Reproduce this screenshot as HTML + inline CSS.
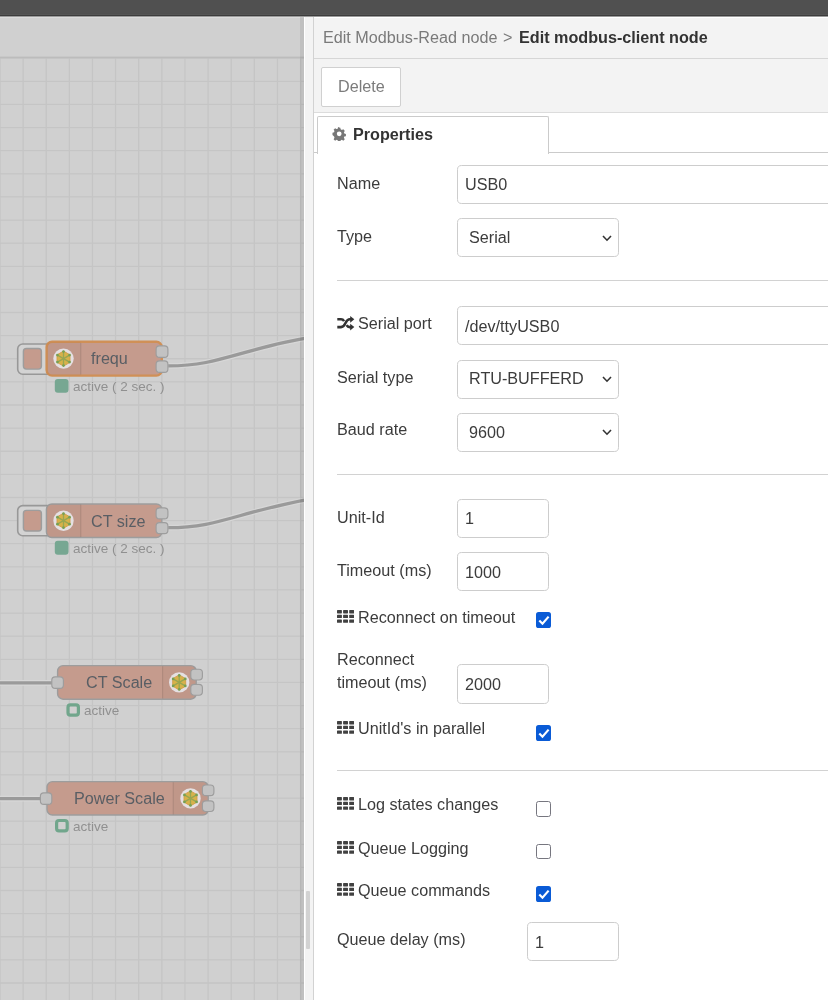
<!DOCTYPE html>
<html><head><meta charset="utf-8"><style>
html,body{margin:0;padding:0;width:828px;height:1000px;overflow:hidden;background:#d0d0d0;font-family:"Liberation Sans",sans-serif;}
.cv{position:absolute;left:0;top:0}
.t{position:absolute;white-space:pre;line-height:20px;font-size:16.18px;will-change:transform}
.nl{color:#595e64}
.st{position:absolute;white-space:pre;line-height:16px;font-size:13.5px;color:#909090;will-change:transform}
.strip{position:absolute;left:304px;top:17px;width:8px;height:983px;background:#f3f3f3;border-left:1.6px solid #fff}
.tray{position:absolute;left:313px;top:17px;width:515px;height:983px;background:#fff;border-left:1.2px solid #d2d2d2}
.thdr{position:absolute;left:0;top:0;right:0;height:41.7px;box-sizing:border-box;background:#f3f3f3;border-bottom:1px solid #d6d6d6;border-top:1px solid #fff}
.tbtn{position:absolute;left:0;top:41.7px;right:0;height:54.4px;box-sizing:border-box;background:#f3f3f3;border-bottom:1px solid #dcdcdc}
.ttabs{position:absolute;left:0;top:135.1px;right:0;height:1.4px;background:#cbcbcb}
.tab{position:absolute;left:317.2px;top:116.4px;width:231.6px;height:37.4px;background:#fff;border:1.4px solid #cbcbcb;border-bottom:none;border-radius:2px 2px 0 0;box-sizing:border-box}
.crumb{color:#7a7a7a}
.crumbb{color:#333;font-weight:bold}
.btn{position:absolute;background:#fff;border:1.3px solid #d0d0d0;border-radius:2px;box-sizing:border-box}
.btxt{color:#7c7c7c}
.tabt{color:#333;font-weight:bold}
.lbl{color:#3c3c3c}
.itxt{color:#3c3c3c}
.inp{position:absolute;height:39.1px;background:#fff;border:1px solid #cdcdcd;border-radius:4.6px;box-sizing:border-box}
.hr{position:absolute;left:337.1px;width:600px;height:1.2px;background:#d2d2d2}
.cbx{position:absolute;left:536px;width:15.4px;height:15.4px;box-sizing:border-box;border:1.8px solid #76767f;border-radius:2.6px;background:#fff}
.cbx.on{background:#0a5bd6;border:none}
.cbx svg{position:absolute;left:0;top:0}
</style></head><body>
<svg class="cv" width="828" height="1000" viewBox="0 0 828 1000">
<rect x="0" y="0" width="828" height="1000" fill="#d0d0d0"/>
<g stroke="#c5c5c5" stroke-width="1.3"><line x1="0.00" y1="58" x2="0.00" y2="1000"/><line x1="23.12" y1="58" x2="23.12" y2="1000"/><line x1="46.24" y1="58" x2="46.24" y2="1000"/><line x1="69.36" y1="58" x2="69.36" y2="1000"/><line x1="92.48" y1="58" x2="92.48" y2="1000"/><line x1="115.60" y1="58" x2="115.60" y2="1000"/><line x1="138.72" y1="58" x2="138.72" y2="1000"/><line x1="161.84" y1="58" x2="161.84" y2="1000"/><line x1="184.96" y1="58" x2="184.96" y2="1000"/><line x1="208.08" y1="58" x2="208.08" y2="1000"/><line x1="231.20" y1="58" x2="231.20" y2="1000"/><line x1="254.32" y1="58" x2="254.32" y2="1000"/><line x1="277.44" y1="58" x2="277.44" y2="1000"/><line x1="300.56" y1="58" x2="300.56" y2="1000"/><line x1="0" y1="58.20" x2="310" y2="58.20"/><line x1="0" y1="81.32" x2="310" y2="81.32"/><line x1="0" y1="104.44" x2="310" y2="104.44"/><line x1="0" y1="127.56" x2="310" y2="127.56"/><line x1="0" y1="150.68" x2="310" y2="150.68"/><line x1="0" y1="173.80" x2="310" y2="173.80"/><line x1="0" y1="196.92" x2="310" y2="196.92"/><line x1="0" y1="220.04" x2="310" y2="220.04"/><line x1="0" y1="243.16" x2="310" y2="243.16"/><line x1="0" y1="266.28" x2="310" y2="266.28"/><line x1="0" y1="289.40" x2="310" y2="289.40"/><line x1="0" y1="312.52" x2="310" y2="312.52"/><line x1="0" y1="335.64" x2="310" y2="335.64"/><line x1="0" y1="358.76" x2="310" y2="358.76"/><line x1="0" y1="381.88" x2="310" y2="381.88"/><line x1="0" y1="405.00" x2="310" y2="405.00"/><line x1="0" y1="428.12" x2="310" y2="428.12"/><line x1="0" y1="451.24" x2="310" y2="451.24"/><line x1="0" y1="474.36" x2="310" y2="474.36"/><line x1="0" y1="497.48" x2="310" y2="497.48"/><line x1="0" y1="520.60" x2="310" y2="520.60"/><line x1="0" y1="543.72" x2="310" y2="543.72"/><line x1="0" y1="566.84" x2="310" y2="566.84"/><line x1="0" y1="589.96" x2="310" y2="589.96"/><line x1="0" y1="613.08" x2="310" y2="613.08"/><line x1="0" y1="636.20" x2="310" y2="636.20"/><line x1="0" y1="659.32" x2="310" y2="659.32"/><line x1="0" y1="682.44" x2="310" y2="682.44"/><line x1="0" y1="705.56" x2="310" y2="705.56"/><line x1="0" y1="728.68" x2="310" y2="728.68"/><line x1="0" y1="751.80" x2="310" y2="751.80"/><line x1="0" y1="774.92" x2="310" y2="774.92"/><line x1="0" y1="798.04" x2="310" y2="798.04"/><line x1="0" y1="821.16" x2="310" y2="821.16"/><line x1="0" y1="844.28" x2="310" y2="844.28"/><line x1="0" y1="867.40" x2="310" y2="867.40"/><line x1="0" y1="890.52" x2="310" y2="890.52"/><line x1="0" y1="913.64" x2="310" y2="913.64"/><line x1="0" y1="936.76" x2="310" y2="936.76"/><line x1="0" y1="959.88" x2="310" y2="959.88"/><line x1="0" y1="983.00" x2="310" y2="983.00"/></g>
<rect x="0" y="0" width="828" height="16.6" fill="#505050"/>
<rect x="0" y="13.9" width="828" height="1.2" fill="#555555"/><rect x="0" y="15.2" width="828" height="1.3" fill="#393939"/>
<rect x="0" y="16.6" width="828" height="40.6" fill="#d0d0d0"/>
<rect x="0" y="16.8" width="828" height="1" fill="#dedede"/>
<rect x="0" y="56.6" width="828" height="1.6" fill="#bcbcbc"/>
<path d="M168.2 365.9 C257.6 365.9 242.5 318.4 620 318.4" fill="none" stroke="#d7d7d7" stroke-width="5.6"/><path d="M168.2 365.9 C257.6 365.9 242.5 318.4 620 318.4" fill="none" stroke="#9a9a9a" stroke-width="3.3"/>
<path d="M168.2 527.7 C257.6 527.7 242.5 480.2 620 480.2" fill="none" stroke="#d7d7d7" stroke-width="5.6"/><path d="M168.2 527.7 C257.6 527.7 242.5 480.2 620 480.2" fill="none" stroke="#9a9a9a" stroke-width="3.3"/>
<line x1="0" y1="682.9" x2="55" y2="682.9" stroke="#d7d7d7" stroke-width="5.6"/><line x1="0" y1="682.9" x2="55" y2="682.9" stroke="#9a9a9a" stroke-width="3.3"/>
<line x1="0" y1="798.6" x2="44" y2="798.6" stroke="#d7d7d7" stroke-width="5.6"/><line x1="0" y1="798.6" x2="44" y2="798.6" stroke="#9a9a9a" stroke-width="3.3"/>
<rect x="17.7" y="344" width="34" height="30.2" rx="5" fill="#d3d3d3" stroke="#989898" stroke-width="1.6"/>
<rect x="23.4" y="348.5" width="18" height="20.6" rx="3" fill="#c59b8d" stroke="#9d9d9d" stroke-width="1.4"/>
<rect x="46.6" y="341.8" width="115.2" height="33.8" rx="5.5" fill="#c59b8d" stroke="#d09057" stroke-width="2.4"/>
<path d="M46.6 341.8 H80.8 V375.6 H46.6 Z" fill="rgba(0,0,0,0.025)"/>
<line x1="80.8" y1="343" x2="80.8" y2="374.4" stroke="rgba(0,0,0,0.1)" stroke-width="1.15"/>
<circle cx="63.5" cy="358.6" r="10.2" fill="#e4e0e2"/><polygon points="63.50,351.10 70.00,354.85 70.00,362.35 63.50,366.10 57.00,362.35 57.00,354.85" fill="#d7b24a" stroke="#d09c4a" stroke-width="0.9" stroke-linejoin="round"/><line x1="63.5" y1="358.6" x2="63.50" y2="351.60" stroke="#97a653" stroke-width="1.35"/><circle cx="63.50" cy="351.60" r="1.35" fill="#76a054"/><line x1="63.5" y1="358.6" x2="69.56" y2="355.10" stroke="#97a653" stroke-width="1.35"/><circle cx="69.56" cy="355.10" r="1.35" fill="#76a054"/><line x1="63.5" y1="358.6" x2="69.56" y2="362.10" stroke="#97a653" stroke-width="1.35"/><circle cx="69.56" cy="362.10" r="1.35" fill="#76a054"/><line x1="63.5" y1="358.6" x2="63.50" y2="365.60" stroke="#97a653" stroke-width="1.35"/><circle cx="63.50" cy="365.60" r="1.35" fill="#76a054"/><line x1="63.5" y1="358.6" x2="57.44" y2="362.10" stroke="#97a653" stroke-width="1.35"/><circle cx="57.44" cy="362.10" r="1.35" fill="#76a054"/><line x1="63.5" y1="358.6" x2="57.44" y2="355.10" stroke="#97a653" stroke-width="1.35"/><circle cx="57.44" cy="355.10" r="1.35" fill="#76a054"/>
<rect x="156.1" y="345.8" width="11.8" height="11.6" rx="3.4" fill="#c2c2c2" stroke="#9d9d9d" stroke-width="1.15"/>
<rect x="156.1" y="360.8" width="11.8" height="11.6" rx="3.4" fill="#c2c2c2" stroke="#9d9d9d" stroke-width="1.15"/>
<rect x="54.8" y="379" width="13.7" height="13.8" rx="3" fill="#77a792"/>
<rect x="17.7" y="505.6" width="34" height="30.1" rx="5" fill="#d3d3d3" stroke="#989898" stroke-width="1.6"/>
<rect x="23.4" y="510.4" width="18" height="20.6" rx="3" fill="#c59b8d" stroke="#9d9d9d" stroke-width="1.4"/>
<rect x="46.4" y="504" width="115.4" height="33.5" rx="5.5" fill="#c59b8d" stroke="#9d9d9d" stroke-width="1.4"/>
<path d="M46.4 504 H80.8 V537.5 H46.4 Z" fill="rgba(0,0,0,0.025)"/>
<line x1="80.8" y1="504.6" x2="80.8" y2="537" stroke="rgba(0,0,0,0.1)" stroke-width="1.15"/>
<circle cx="63.5" cy="520.7" r="10.2" fill="#e4e0e2"/><polygon points="63.50,513.20 70.00,516.95 70.00,524.45 63.50,528.20 57.00,524.45 57.00,516.95" fill="#d7b24a" stroke="#d09c4a" stroke-width="0.9" stroke-linejoin="round"/><line x1="63.5" y1="520.7" x2="63.50" y2="513.70" stroke="#97a653" stroke-width="1.35"/><circle cx="63.50" cy="513.70" r="1.35" fill="#76a054"/><line x1="63.5" y1="520.7" x2="69.56" y2="517.20" stroke="#97a653" stroke-width="1.35"/><circle cx="69.56" cy="517.20" r="1.35" fill="#76a054"/><line x1="63.5" y1="520.7" x2="69.56" y2="524.20" stroke="#97a653" stroke-width="1.35"/><circle cx="69.56" cy="524.20" r="1.35" fill="#76a054"/><line x1="63.5" y1="520.7" x2="63.50" y2="527.70" stroke="#97a653" stroke-width="1.35"/><circle cx="63.50" cy="527.70" r="1.35" fill="#76a054"/><line x1="63.5" y1="520.7" x2="57.44" y2="524.20" stroke="#97a653" stroke-width="1.35"/><circle cx="57.44" cy="524.20" r="1.35" fill="#76a054"/><line x1="63.5" y1="520.7" x2="57.44" y2="517.20" stroke="#97a653" stroke-width="1.35"/><circle cx="57.44" cy="517.20" r="1.35" fill="#76a054"/>
<rect x="156.1" y="507.9" width="11.8" height="11" rx="3.4" fill="#c2c2c2" stroke="#9d9d9d" stroke-width="1.15"/>
<rect x="156.1" y="522.6" width="11.8" height="11" rx="3.4" fill="#c2c2c2" stroke="#9d9d9d" stroke-width="1.15"/>
<rect x="54.8" y="540.8" width="13.7" height="14" rx="3" fill="#77a792"/>
<rect x="57.6" y="665.6" width="138.6" height="33.6" rx="5.5" fill="#c59b8d" stroke="#9d9d9d" stroke-width="1.4"/>
<rect x="162.6" y="666.2" width="33" height="32.4" fill="rgba(0,0,0,0.025)"/>
<line x1="162.6" y1="666.2" x2="162.6" y2="698.6" stroke="rgba(0,0,0,0.1)" stroke-width="1.15"/>
<circle cx="179.2" cy="682.4" r="10.2" fill="#e4e0e2"/><polygon points="179.20,674.90 185.70,678.65 185.70,686.15 179.20,689.90 172.70,686.15 172.70,678.65" fill="#d7b24a" stroke="#d09c4a" stroke-width="0.9" stroke-linejoin="round"/><line x1="179.2" y1="682.4" x2="179.20" y2="675.40" stroke="#97a653" stroke-width="1.35"/><circle cx="179.20" cy="675.40" r="1.35" fill="#76a054"/><line x1="179.2" y1="682.4" x2="185.26" y2="678.90" stroke="#97a653" stroke-width="1.35"/><circle cx="185.26" cy="678.90" r="1.35" fill="#76a054"/><line x1="179.2" y1="682.4" x2="185.26" y2="685.90" stroke="#97a653" stroke-width="1.35"/><circle cx="185.26" cy="685.90" r="1.35" fill="#76a054"/><line x1="179.2" y1="682.4" x2="179.20" y2="689.40" stroke="#97a653" stroke-width="1.35"/><circle cx="179.20" cy="689.40" r="1.35" fill="#76a054"/><line x1="179.2" y1="682.4" x2="173.14" y2="685.90" stroke="#97a653" stroke-width="1.35"/><circle cx="173.14" cy="685.90" r="1.35" fill="#76a054"/><line x1="179.2" y1="682.4" x2="173.14" y2="678.90" stroke="#97a653" stroke-width="1.35"/><circle cx="173.14" cy="678.90" r="1.35" fill="#76a054"/>
<rect x="51.8" y="676.8" width="11.6" height="11.6" rx="3.4" fill="#c2c2c2" stroke="#9d9d9d" stroke-width="1.15"/>
<rect x="190.8" y="669.2" width="11.6" height="10.8" rx="3.4" fill="#c2c2c2" stroke="#9d9d9d" stroke-width="1.15"/>
<rect x="190.8" y="684.4" width="11.6" height="10.8" rx="3.4" fill="#c2c2c2" stroke="#9d9d9d" stroke-width="1.15"/>
<rect x="68" y="704.8" width="10.4" height="10.3" rx="2.4" fill="none" stroke="#71a68c" stroke-width="3.2"/>
<rect x="47" y="781.6" width="161.2" height="33.4" rx="5.5" fill="#c59b8d" stroke="#9d9d9d" stroke-width="1.4"/>
<rect x="173.2" y="782.2" width="34.4" height="32.2" fill="rgba(0,0,0,0.025)"/>
<line x1="173.2" y1="782.2" x2="173.2" y2="814.4" stroke="rgba(0,0,0,0.1)" stroke-width="1.15"/>
<circle cx="190.5" cy="798.4" r="10.2" fill="#e4e0e2"/><polygon points="190.50,790.90 197.00,794.65 197.00,802.15 190.50,805.90 184.00,802.15 184.00,794.65" fill="#d7b24a" stroke="#d09c4a" stroke-width="0.9" stroke-linejoin="round"/><line x1="190.5" y1="798.4" x2="190.50" y2="791.40" stroke="#97a653" stroke-width="1.35"/><circle cx="190.50" cy="791.40" r="1.35" fill="#76a054"/><line x1="190.5" y1="798.4" x2="196.56" y2="794.90" stroke="#97a653" stroke-width="1.35"/><circle cx="196.56" cy="794.90" r="1.35" fill="#76a054"/><line x1="190.5" y1="798.4" x2="196.56" y2="801.90" stroke="#97a653" stroke-width="1.35"/><circle cx="196.56" cy="801.90" r="1.35" fill="#76a054"/><line x1="190.5" y1="798.4" x2="190.50" y2="805.40" stroke="#97a653" stroke-width="1.35"/><circle cx="190.50" cy="805.40" r="1.35" fill="#76a054"/><line x1="190.5" y1="798.4" x2="184.44" y2="801.90" stroke="#97a653" stroke-width="1.35"/><circle cx="184.44" cy="801.90" r="1.35" fill="#76a054"/><line x1="190.5" y1="798.4" x2="184.44" y2="794.90" stroke="#97a653" stroke-width="1.35"/><circle cx="184.44" cy="794.90" r="1.35" fill="#76a054"/>
<rect x="40.4" y="792.9" width="11.4" height="11.4" rx="3.4" fill="#c2c2c2" stroke="#9d9d9d" stroke-width="1.15"/>
<rect x="202.4" y="785.0" width="11.5" height="10.6" rx="3.4" fill="#c2c2c2" stroke="#9d9d9d" stroke-width="1.15"/>
<rect x="202.4" y="800.9" width="11.5" height="10.6" rx="3.4" fill="#c2c2c2" stroke="#9d9d9d" stroke-width="1.15"/>
<rect x="56.6" y="820.5" width="10.6" height="10.3" rx="2.4" fill="none" stroke="#71a68c" stroke-width="3.2"/>
<defs><linearGradient id="sh" x1="0" x2="1"><stop offset="0" stop-color="#000" stop-opacity="0"/><stop offset="1" stop-color="#000" stop-opacity="0.13"/></linearGradient></defs>
<rect x="300" y="17" width="4" height="983" fill="#000" fill-opacity="0.075"/>
</svg>
<div class="t nl" style="left:90.50px;top:348.29px;">frequ</div>
<div class="t nl" style="left:90.50px;top:510.59px;">CT size</div>
<div class="t nl" style="left:86.20px;top:672.09px;">CT Scale</div>
<div class="t nl" style="left:73.70px;top:787.89px;">Power Scale</div>
<div class="st" style="left:72.8px;top:379.2px">active ( 2 sec. )</div>
<div class="st" style="left:72.8px;top:540.7px">active ( 2 sec. )</div>
<div class="st" style="left:84.0px;top:702.9px">active</div>
<div class="st" style="left:72.5px;top:818.5px">active</div>
<div class="strip"></div><div style="position:absolute;left:306px;top:890.8px;width:3.8px;height:58.2px;background:#d2d2d2;border-radius:1px"></div>
<div class="tray">
<div class="thdr"></div><div class="tbtn"></div><div class="ttabs"></div>
</div>
<div class="t crumb" style="left:323.00px;top:27.49px;">Edit Modbus-Read node</div>

<div class="t crumb" style="left:503.00px;top:27.49px;">&gt;</div>

<div class="t crumbb" style="left:519.00px;top:27.49px;">Edit modbus-client node</div>

<div class="btn" style="left:321px;top:66.8px;width:80.4px;height:39.8px"></div>
<div class="t btxt" style="left:337.90px;top:76.39px;">Delete</div>

<div class="tab"></div>
<svg class="gear" style="position:absolute;left:332px;top:127px" width="14.4" height="13.6" viewBox="0 0 16 16"><path fill="#777" d="M8 0.6l1.3 0.2 0.4 1.9c0.5 0.2 0.9 0.4 1.3 0.7l1.8-0.7 0.9 0.9 0.9 1.1-1.1 1.6c0.2 0.4 0.4 0.9 0.5 1.4l1.9 0.5v2.6l-1.9 0.5c-0.1 0.5-0.3 0.9-0.5 1.4l1.1 1.6-1.8 1.8-1.6-1.1c-0.4 0.2-0.9 0.4-1.4 0.5l-0.5 1.9H6.7l-0.5-1.9c-0.5-0.1-0.9-0.3-1.4-0.5l-1.6 1.1-1.8-1.8 1.1-1.6c-0.2-0.4-0.4-0.9-0.5-1.4L0.1 9.3V6.7l1.9-0.5c0.1-0.5 0.3-0.9 0.5-1.4L1.4 3.2l1.8-1.8 1.6 1.1c0.4-0.2 0.9-0.4 1.4-0.5L6.7 0.1Z M8 5.2a2.8 2.8 0 1 0 0 5.6a2.8 2.8 0 1 0 0-5.6Z"/></svg>
<div class="t tabt" style="left:352.90px;top:123.79px;">Properties</div>

<div class="t lbl" style="left:337.10px;top:172.99px;">Name</div>

<div class="inp" style="left:457.2px;top:164.7px;width:400px"></div><div class="t itxt" style="left:464.50px;top:174.09px;">USB0</div>

<div class="t lbl" style="left:337.10px;top:226.39px;">Type</div>

<div class="inp" style="left:457.2px;top:218.4px;width:161.5px;height:39.1px"></div><div class="t itxt" style="left:469.30px;top:227.19px;">Serial</div>
<svg style="position:absolute;left:601.6px;top:234.80px" width="10" height="7" viewBox="0 0 10 7"><path d="M1 1L5 5.2L9 1" fill="none" stroke="#333" stroke-width="1.6"/></svg>
<div class="hr" style="top:280.1px"></div>
<svg style="position:absolute;left:336.6px;top:314.80px" width="18" height="16" viewBox="0 0 18 16"><g fill="none" stroke="#333" stroke-width="2.6"><path d="M0.3 12.1H4C6.4 12.1 7.3 10.5 8.4 8.2C9.5 5.9 10.4 4.3 12.8 4.3H14.2"/><path d="M0.3 4.3H4C5.6 4.3 6.4 5 7.1 6.1"/><path d="M9.6 10.2C10.3 11.4 11.1 12.1 12.8 12.1H14.2"/></g><g fill="#333"><path d="M13.2 0.9L17.3 4.3L13.2 7.7Z"/><path d="M13.2 8.7L17.3 12.1L13.2 15.5Z"/></g></svg><div class="t lbl" style="left:357.60px;top:313.19px;">Serial port</div>

<div class="inp" style="left:457.2px;top:306.2px;width:400px"></div><div class="t itxt" style="left:465.10px;top:315.59px;">/dev/ttyUSB0</div>

<div class="t lbl" style="left:337.10px;top:367.19px;">Serial type</div>

<div class="inp" style="left:457.2px;top:359.5px;width:161.5px;height:39.1px"></div><div class="t itxt" style="left:469.30px;top:368.29px;">RTU-BUFFERD</div>
<svg style="position:absolute;left:601.6px;top:375.90px" width="10" height="7" viewBox="0 0 10 7"><path d="M1 1L5 5.2L9 1" fill="none" stroke="#333" stroke-width="1.6"/></svg>
<div class="t lbl" style="left:337.10px;top:419.39px;">Baud rate</div>

<div class="inp" style="left:457.2px;top:412.9px;width:161.5px;height:39.1px"></div><div class="t itxt" style="left:469.30px;top:421.69px;">9600</div>
<svg style="position:absolute;left:601.6px;top:429.30px" width="10" height="7" viewBox="0 0 10 7"><path d="M1 1L5 5.2L9 1" fill="none" stroke="#333" stroke-width="1.6"/></svg>
<div class="hr" style="top:474.2px"></div>
<div class="t lbl" style="left:337.10px;top:507.19px;">Unit-Id</div>

<div class="inp" style="left:457.2px;top:498.6px;width:92px"></div><div class="t itxt" style="left:465.40px;top:507.99px;">1</div>

<div class="t lbl" style="left:337.10px;top:559.59px;">Timeout (ms)</div>

<div class="inp" style="left:457.2px;top:552.2px;width:92px"></div><div class="t itxt" style="left:465.10px;top:561.59px;">1000</div>

<svg style="position:absolute;left:336.8px;top:609.50px" width="17" height="13" viewBox="0 0 17 13"><g fill="#414141"><rect x="0.00" y="0.00" width="4.9" height="3.4" rx="0.6"/><rect x="6.10" y="0.00" width="4.9" height="3.4" rx="0.6"/><rect x="12.20" y="0.00" width="4.9" height="3.4" rx="0.6"/><rect x="0.00" y="4.70" width="4.9" height="3.4" rx="0.6"/><rect x="6.10" y="4.70" width="4.9" height="3.4" rx="0.6"/><rect x="12.20" y="4.70" width="4.9" height="3.4" rx="0.6"/><rect x="0.00" y="9.40" width="4.9" height="3.4" rx="0.6"/><rect x="6.10" y="9.40" width="4.9" height="3.4" rx="0.6"/><rect x="12.20" y="9.40" width="4.9" height="3.4" rx="0.6"/></g></svg><div class="t lbl" style="left:357.60px;top:606.69px;">Reconnect on timeout</div>

<div class="cbx on" style="top:612.2px;width:15.6px;height:15.9px;left:535.8px"><svg width="15.8" height="15.8" viewBox="0 0 15.8 15.8"><path d="M3.3 8.4L6.5 11.7L12.6 4.6" fill="none" stroke="#fff" stroke-width="2.2"/></svg></div>
<div class="t lbl" style="left:337.10px;top:649.29px;">Reconnect</div>

<div class="t lbl" style="left:337.10px;top:671.99px;">timeout (ms)</div>

<div class="inp" style="left:457.2px;top:664.2px;width:92px;height:39.6px"></div><div class="t itxt" style="left:465.10px;top:673.59px;">2000</div>

<svg style="position:absolute;left:336.8px;top:720.90px" width="17" height="13" viewBox="0 0 17 13"><g fill="#414141"><rect x="0.00" y="0.00" width="4.9" height="3.4" rx="0.6"/><rect x="6.10" y="0.00" width="4.9" height="3.4" rx="0.6"/><rect x="12.20" y="0.00" width="4.9" height="3.4" rx="0.6"/><rect x="0.00" y="4.70" width="4.9" height="3.4" rx="0.6"/><rect x="6.10" y="4.70" width="4.9" height="3.4" rx="0.6"/><rect x="12.20" y="4.70" width="4.9" height="3.4" rx="0.6"/><rect x="0.00" y="9.40" width="4.9" height="3.4" rx="0.6"/><rect x="6.10" y="9.40" width="4.9" height="3.4" rx="0.6"/><rect x="12.20" y="9.40" width="4.9" height="3.4" rx="0.6"/></g></svg><div class="t lbl" style="left:357.60px;top:718.09px;">UnitId's in parallel</div>

<div class="cbx on" style="top:724.8px;width:15.6px;height:15.9px;left:535.8px"><svg width="15.8" height="15.8" viewBox="0 0 15.8 15.8"><path d="M3.3 8.4L6.5 11.7L12.6 4.6" fill="none" stroke="#fff" stroke-width="2.2"/></svg></div>
<div class="hr" style="top:769.5px"></div>
<svg style="position:absolute;left:336.8px;top:797.10px" width="17" height="13" viewBox="0 0 17 13"><g fill="#414141"><rect x="0.00" y="0.00" width="4.9" height="3.4" rx="0.6"/><rect x="6.10" y="0.00" width="4.9" height="3.4" rx="0.6"/><rect x="12.20" y="0.00" width="4.9" height="3.4" rx="0.6"/><rect x="0.00" y="4.70" width="4.9" height="3.4" rx="0.6"/><rect x="6.10" y="4.70" width="4.9" height="3.4" rx="0.6"/><rect x="12.20" y="4.70" width="4.9" height="3.4" rx="0.6"/><rect x="0.00" y="9.40" width="4.9" height="3.4" rx="0.6"/><rect x="6.10" y="9.40" width="4.9" height="3.4" rx="0.6"/><rect x="12.20" y="9.40" width="4.9" height="3.4" rx="0.6"/></g></svg><div class="t lbl" style="left:357.60px;top:794.29px;">Log states changes</div>

<div class="cbx" style="top:801.3px"></div>
<svg style="position:absolute;left:336.8px;top:840.60px" width="17" height="13" viewBox="0 0 17 13"><g fill="#414141"><rect x="0.00" y="0.00" width="4.9" height="3.4" rx="0.6"/><rect x="6.10" y="0.00" width="4.9" height="3.4" rx="0.6"/><rect x="12.20" y="0.00" width="4.9" height="3.4" rx="0.6"/><rect x="0.00" y="4.70" width="4.9" height="3.4" rx="0.6"/><rect x="6.10" y="4.70" width="4.9" height="3.4" rx="0.6"/><rect x="12.20" y="4.70" width="4.9" height="3.4" rx="0.6"/><rect x="0.00" y="9.40" width="4.9" height="3.4" rx="0.6"/><rect x="6.10" y="9.40" width="4.9" height="3.4" rx="0.6"/><rect x="12.20" y="9.40" width="4.9" height="3.4" rx="0.6"/></g></svg><div class="t lbl" style="left:357.60px;top:837.79px;">Queue Logging</div>

<div class="cbx" style="top:843.8px"></div>
<svg style="position:absolute;left:336.8px;top:883.20px" width="17" height="13" viewBox="0 0 17 13"><g fill="#414141"><rect x="0.00" y="0.00" width="4.9" height="3.4" rx="0.6"/><rect x="6.10" y="0.00" width="4.9" height="3.4" rx="0.6"/><rect x="12.20" y="0.00" width="4.9" height="3.4" rx="0.6"/><rect x="0.00" y="4.70" width="4.9" height="3.4" rx="0.6"/><rect x="6.10" y="4.70" width="4.9" height="3.4" rx="0.6"/><rect x="12.20" y="4.70" width="4.9" height="3.4" rx="0.6"/><rect x="0.00" y="9.40" width="4.9" height="3.4" rx="0.6"/><rect x="6.10" y="9.40" width="4.9" height="3.4" rx="0.6"/><rect x="12.20" y="9.40" width="4.9" height="3.4" rx="0.6"/></g></svg><div class="t lbl" style="left:357.60px;top:880.39px;">Queue commands</div>

<div class="cbx on" style="top:886.4px;width:15.6px;height:15.9px;left:535.8px"><svg width="15.8" height="15.8" viewBox="0 0 15.8 15.8"><path d="M3.3 8.4L6.5 11.7L12.6 4.6" fill="none" stroke="#fff" stroke-width="2.2"/></svg></div>
<div class="t lbl" style="left:337.10px;top:929.29px;">Queue delay (ms)</div>

<div class="inp" style="left:526.8px;top:922.2px;width:91.9px"></div><div class="t itxt" style="left:535.00px;top:931.59px;">1</div>

</body></html>
